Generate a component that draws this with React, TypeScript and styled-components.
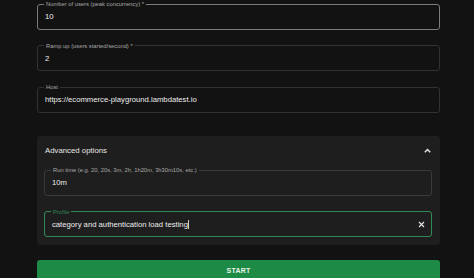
import React from "react";
import styled, { createGlobalStyle } from "styled-components";

const Global = createGlobalStyle`
  html, body { margin: 0; padding: 0; background: #121212; }
  body { font-family: "Liberation Sans", Arial, sans-serif; color: #e6e6e6; }
  * { box-sizing: border-box; }
`;

const Page = styled.div`
  width: 474px;
  height: 278px;
  overflow: hidden;
  padding: 0 34px 0 37px;
  display: flex;
  flex-direction: column;
`;

const Form = styled.div`
  display: flex;
  flex-direction: column;
  gap: 12px;
`;

const Field = styled.fieldset<{ $tone: "hover" | "idle" | "focus" | "inner" }>`
  margin: 0;
  padding: 0 5px 0 7px;
  min-width: 0;
  border-radius: 3px;
  border: 1px solid
    ${(p) =>
      p.$tone === "hover"
        ? "#7b7b7b"
        : p.$tone === "focus"
        ? "#2f8a55"
        : p.$tone === "inner"
        ? "#3a3a3a"
        : "#323232"};
`;

const Legend = styled.legend<{ $green?: boolean }>`
  padding: 0 2px;
  margin-left: -1px;
  font-size: 5.8px;
  line-height: 8px;
  height: 8px;
  color: ${(p) => (p.$green ? "#2f8a55" : "#a8a8a8")};
  white-space: nowrap;
`;

const InputRow = styled.div`
  height: 20.5px;
  padding-bottom: 3px;
  display: flex;
  align-items: center;
  gap: 6px;
`;

const Value = styled.span`
  flex: 1;
  font-size: 7.7px;
  color: #ededed;
  white-space: nowrap;
  display: flex;
  align-items: center;
`;

const Caret = styled.span`
  display: inline-block;
  width: 1px;
  height: 9px;
  background: #d0d0d0;
  margin-left: 0.5px;
`;

const Panel = styled.section`
  margin-top: 23.5px;
  background: #1e1e1e;
  border-radius: 3px;
  padding: 0 8px 8px 7px;
  display: flex;
  flex-direction: column;
  flex-shrink: 0;
`;

const PanelHeader = styled.div`
  height: 30px;
  padding: 0 0 1px 1px;
  display: flex;
  align-items: center;
  justify-content: space-between;
  font-size: 7.8px;
  color: #e6e6e6;
`;

const IconButton = styled.span`
  display: flex;
  align-items: center;
  justify-content: center;
  width: 10px;
  height: 10px;
  flex-shrink: 0;
`;

const StartButton = styled.button`
  margin-top: 15px;
  height: 20px;
  width: 100%;
  border: 0;
  border-radius: 3px;
  background: #1d8a45;
  color: #e8f3ea;
  font-family: "Liberation Sans", Arial, sans-serif;
  font-size: 7px;
  font-weight: 700;
  letter-spacing: 0.2px;
  text-transform: uppercase;
  padding: 0;
  flex-shrink: 0;
`;

const Chevron = () => (
  <svg width="7" height="5" viewBox="0 0 7 5">
    <path d="M0.8 4.2 L3.5 1.5 L6.2 4.2" fill="none" stroke="#e6e6e6" strokeWidth="1.4" />
  </svg>
);

const Cross = () => (
  <svg width="7" height="7" viewBox="0 0 7 7">
    <path d="M1 1 L6 6 M6 1 L1 6" fill="none" stroke="#e0e0e0" strokeWidth="1.2" />
  </svg>
);

export default function App() {
  return (
    <>
      <Global />
      <Page>
        <Form>
          <Field $tone="hover">
            <Legend>Number of users (peak concurrency) *</Legend>
            <InputRow>
              <Value>10</Value>
            </InputRow>
          </Field>
          <Field $tone="idle">
            <Legend>Ramp up (users started/second) *</Legend>
            <InputRow>
              <Value>2</Value>
            </InputRow>
          </Field>
          <Field $tone="idle">
            <Legend>Host</Legend>
            <InputRow>
              <Value>https://ecommerce-playground.lambdatest.io</Value>
            </InputRow>
          </Field>
        </Form>
        <Panel>
          <PanelHeader>
            <span>Advanced options</span>
            <IconButton>
              <Chevron />
            </IconButton>
          </PanelHeader>
          <Form>
            <Field $tone="inner">
              <Legend>Run time (e.g. 20, 20s, 3m, 2h, 1h20m, 3h30m10s, etc.)</Legend>
              <InputRow>
                <Value>10m</Value>
              </InputRow>
            </Field>
            <Field $tone="focus">
              <Legend $green>Profile</Legend>
              <InputRow>
                <Value>
                  category and authentication load testing
                  <Caret />
                </Value>
                <IconButton>
                  <Cross />
                </IconButton>
              </InputRow>
            </Field>
          </Form>
        </Panel>
        <StartButton>Start</StartButton>
      </Page>
    </>
  );
}
